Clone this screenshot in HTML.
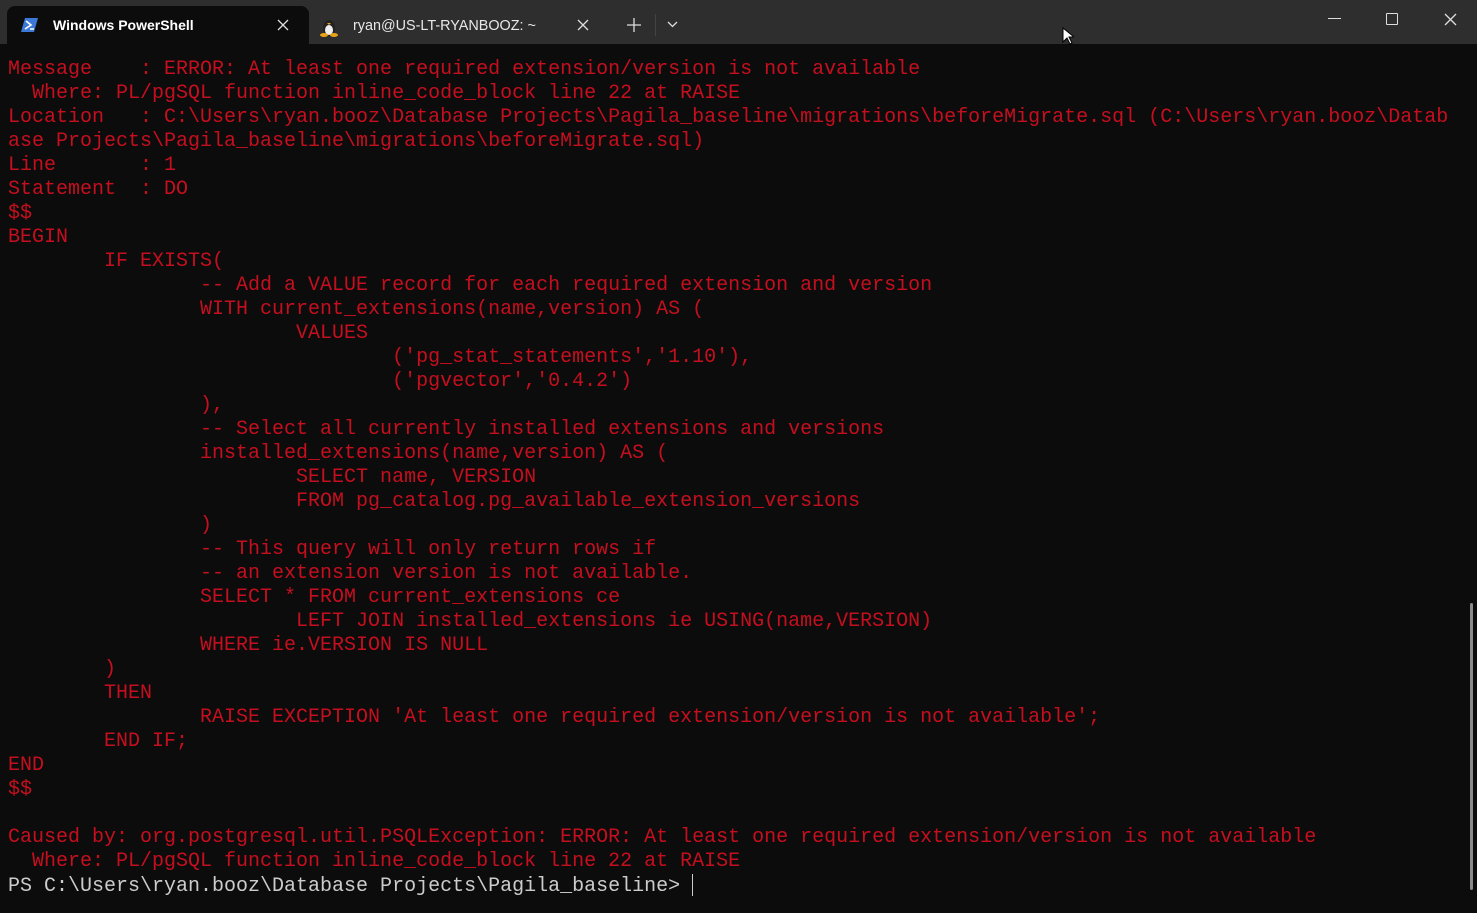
<!DOCTYPE html>
<html><head><meta charset="utf-8"><style>
html,body{margin:0;padding:0;width:1477px;height:913px;overflow:hidden;background:#0c0c0c}
.bar{position:absolute;left:0;top:0;width:1477px;height:44px;background:#2e2e2e}
.tab{position:absolute;top:6px;height:38px;border-radius:8px 8px 0 0;font-family:"Liberation Sans",sans-serif;font-size:14px;color:#fff}
.t1{left:7px;width:302px;background:#0c0c0c}
.t1 .lbl{position:absolute;left:46px;top:11px;font-weight:bold;font-size:14px}
.t2{left:310px;width:290px}
.t2 .lbl{position:absolute;left:43px;top:12px;color:#e8e8e8;font-size:14.4px}
pre{position:absolute;left:8px;top:58px;margin:0;font-family:"Liberation Mono",monospace;font-size:20px;line-height:24px;color:#c50f1f}
.w{color:#cccccc}
</style></head><body>
<div class="bar"></div>
<div class="tab t1">
<svg style="position:absolute;left:14px;top:11px" width="18" height="16" viewBox="0 0 18 16"><path d="M4 1h13l-4 14H0z" fill="#3c78d8"/><path d="M5 4l5 4-6 4M9 12h4" stroke="#fff" stroke-width="1.6" fill="none"/></svg>
<span class="lbl">Windows PowerShell</span>
<svg style="position:absolute;left:270px;top:13px" width="12" height="12"><path d="M1 1l10 10M11 1L1 11" stroke="#ddd" stroke-width="1.3"/></svg>
</div>
<div class="tab t2">
<svg style="position:absolute;left:10px;top:11px" width="18" height="20" viewBox="0 0 18 20"><ellipse cx="9" cy="11" rx="6" ry="8" fill="#222"/><ellipse cx="9" cy="13" rx="4" ry="5" fill="#eee"/><ellipse cx="4" cy="18" rx="4" ry="2" fill="#e8a317"/><ellipse cx="14" cy="18" rx="4" ry="2" fill="#e8a317"/><path d="M7 6h4l-2 2z" fill="#e8a317"/></svg>
<span class="lbl">ryan@US-LT-RYANBOOZ: ~</span>
<svg style="position:absolute;left:267px;top:13px" width="12" height="12"><path d="M1 1l10 10M11 1L1 11" stroke="#ddd" stroke-width="1.3"/></svg>
</div>
<svg style="position:absolute;left:627px;top:18px" width="14" height="14"><path d="M7 0v14M0 7h14" stroke="#ddd" stroke-width="1.3"/></svg>
<div style="position:absolute;left:655px;top:14px;width:1px;height:22px;background:#444"></div>
<svg style="position:absolute;left:667px;top:21px" width="11" height="7"><path d="M1 1l4.5 4.5L10 1" stroke="#ddd" stroke-width="1.3" fill="none"/></svg>
<svg style="position:absolute;left:1062px;top:27px" width="12" height="18"><path d="M1 1v14l4-4 3 6 2-1-3-6h5z" fill="#fff" stroke="#000" stroke-width="1"/></svg>
<div style="position:absolute;left:1328px;top:18px;width:13px;height:1px;background:#ddd"></div>
<div style="position:absolute;left:1386px;top:13px;width:10px;height:10px;border:1.3px solid #ddd;border-radius:1px"></div>
<svg style="position:absolute;left:1444px;top:13px" width="13" height="13"><path d="M1 1l11 11M12 1L1 12" stroke="#ddd" stroke-width="1.3"/></svg>
<div style="position:absolute;left:1470px;top:603px;width:3px;height:287px;background:#8a8a8a;border-radius:2px"></div>
<pre>Message    : ERROR: At least one required extension/version is not available
  Where: PL/pgSQL function inline_code_block line 22 at RAISE
Location   : C:\Users\ryan.booz\Database Projects\Pagila_baseline\migrations\beforeMigrate.sql (C:\Users\ryan.booz\Datab
ase Projects\Pagila_baseline\migrations\beforeMigrate.sql)
Line       : 1
Statement  : DO
$$
BEGIN
        IF EXISTS(
                -- Add a VALUE record for each required extension and version
                WITH current_extensions(name,version) AS (
                        VALUES
                                ('pg_stat_statements','1.10'),
                                ('pgvector','0.4.2')
                ),
                -- Select all currently installed extensions and versions
                installed_extensions(name,version) AS (
                        SELECT name, VERSION
                        FROM pg_catalog.pg_available_extension_versions
                )
                -- This query will only return rows if
                -- an extension version is not available.
                SELECT * FROM current_extensions ce
                        LEFT JOIN installed_extensions ie USING(name,VERSION)
                WHERE ie.VERSION IS NULL
        )
        THEN
                RAISE EXCEPTION 'At least one required extension/version is not available';
        END IF;
END
$$

Caused by: org.postgresql.util.PSQLException: ERROR: At least one required extension/version is not available
  Where: PL/pgSQL function inline_code_block line 22 at RAISE
<span class="w">PS C:\Users\ryan.booz\Database Projects\Pagila_baseline&gt; <span style="display:inline-block;width:1px;height:22px;background:#ccc;vertical-align:-5px"></span></span></pre>
</body></html>
